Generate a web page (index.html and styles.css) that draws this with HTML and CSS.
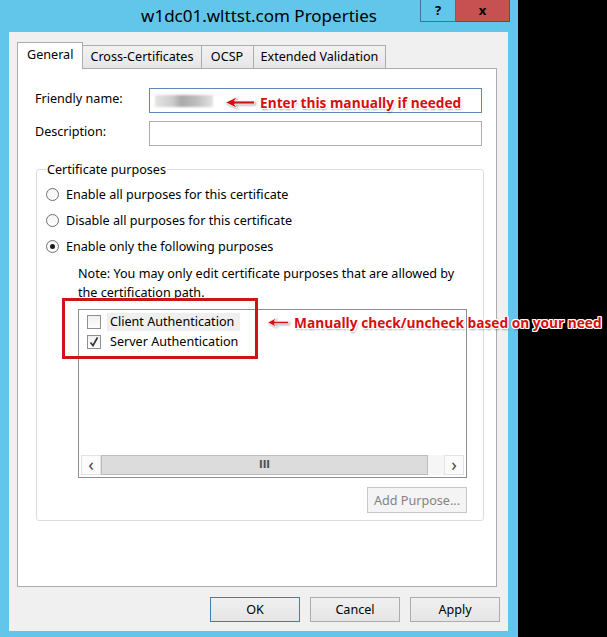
FILE: index.html
```html
<!DOCTYPE html>
<html lang="en">
<head>
    <meta charset="UTF-8">
    <title>w1dc01.wlttst.com Properties</title>
    <link rel="stylesheet" href="styles.css">
</head>
<body>
    <div class="window">
        <div class="titlebar">
            <div class="title">w1dc01.wlttst.com Properties</div>
            <div class="controls">
                <span class="btn-help">?</span>
                <span class="btn-close">x</span>
            </div>
        </div>

        <div class="frame">
            <ul class="tabs">
                <li class="tab active">General</li>
                <li class="tab">Cross-Certificates</li>
                <li class="tab">OCSP</li>
                <li class="tab">Extended Validation</li>
            </ul>

            <div class="panel">
                <div class="field-row">
                    <label>Friendly name:</label>
                    <div class="input focused"><span class="blurred"></span></div>
                </div>
                <div class="field-row">
                    <label>Description:</label>
                    <div class="input"></div>
                </div>

                <fieldset class="group">
                    <legend>Certificate purposes</legend>
                    <div class="radio-row"><span class="radio"></span>Enable all purposes for this certificate</div>
                    <div class="radio-row"><span class="radio"></span>Disable all purposes for this certificate</div>
                    <div class="radio-row"><span class="radio checked"></span>Enable only the following purposes</div>

                    <p class="note">Note: You may only edit certificate purposes that are allowed by<br>the certification path.</p>

                    <div class="listbox">
                        <div class="items">
                            <div class="item">
                                <span class="check"></span>
                                <span class="item-label hot">Client Authentication</span>
                            </div>
                            <div class="item">
                                <span class="check">
                                    <svg width="12" height="12" viewBox="0 0 12 12"><path d="M2.5 6.5 L5 9.5 L9.5 1.5" fill="none" stroke="#333" stroke-width="1.6"/></svg>
                                </span>
                                <span class="item-label">Server Authentication</span>
                            </div>
                        </div>
                        <div class="hscroll">
                            <span class="sb-btn">&lsaquo;</span>
                            <span class="sb-thumb">III</span>
                            <span class="sb-track"></span>
                            <span class="sb-btn">&rsaquo;</span>
                        </div>
                    </div>

                    <div class="add-row">
                        <button class="btn" disabled>Add Purpose...</button>
                    </div>
                </fieldset>
            </div>

            <div class="buttons">
                <button class="btn default">OK</button>
                <button class="btn">Cancel</button>
                <button class="btn">Apply</button>
            </div>
        </div>

        <!-- annotations drawn over the screenshot -->
        <div class="callout callout-name">
            <svg width="30" height="13" viewBox="0 0 30 13"><path d="M0.5 6.5 L12 0.8 L9.5 5 L29.5 5 L29.5 8 L9.5 8 L12 12.2 Z" fill="#d40f0f" stroke="#fff" stroke-width="0.8"/></svg>
            <span>Enter this manually if needed</span>
        </div>
        <div class="red-box"></div>
        <div class="callout callout-check">
            <svg width="22" height="11" viewBox="0 0 22 11"><path d="M0.5 5.5 L9 1 L7.5 4.3 L21.5 4.3 L21.5 6.7 L7.5 6.7 L9 10 Z" fill="#d40f0f" stroke="#fff" stroke-width="0.8"/></svg>
            <span>Manually check/uncheck based on your need</span>
        </div>
    </div>
</body>
</html>
```

FILE: styles.css
```css
/* General Styles */
body {
    margin: 0;
    background-color: #000;
    font-family: "Noto Sans", "Open Sans", sans-serif;
    font-size: 12.6px;
    color: #000;
}

.window {
    width: 518px;
    height: 637px;
    background-color: #62c6ea;
    position: relative;
}

/* Title Bar */
.titlebar {
    height: 32px;
    display: grid;
}

.title,
.controls {
    grid-area: 1 / 1;
}

.title {
    text-align: center;
    font-size: 17px;
    line-height: 31px;
}

.controls {
    justify-self: end;
    align-self: start;
    display: flex;
    margin-right: 8px;
}

.btn-help,
.btn-close {
    height: 22px;
    box-sizing: border-box;
    text-align: center;
    font-weight: bold;
    font-size: 13px;
    line-height: 20px;
}

.btn-help {
    width: 36px;
    border: 1px solid #3b7694;
    border-top: none;
}

.btn-close {
    width: 54px;
    background-color: #c75050;
    border: 1px solid #8d3b3b;
    border-top: none;
    border-left: none;
}

/* Dialog Frame */
.frame {
    margin: 0 10px 0 9px;
    height: 599px;
    box-sizing: border-box;
    padding: 10px 8px 9px 8px;
    background-color: #f0f0f0;
    display: flex;
    flex-direction: column;
}

/* Tabs */
.tabs {
    display: flex;
    align-items: flex-end;
    list-style: none;
    margin: 0;
    padding: 0;
    height: 26px;
    position: relative;
    z-index: 1;
}

.tab {
    min-width: 52px;
    height: 23px;
    box-sizing: border-box;
    padding: 0 7px;
    text-align: center;
    line-height: 21px;
    border: 1px solid #acacac;
    border-bottom: none;
    border-left: none;
    background: linear-gradient(#f2f2f2, #e6e6e6);
}

.tab.active {
    height: 27px;
    margin-bottom: -1px;
    padding: 0 9px;
    line-height: 23px;
    border-left: 1px solid #acacac;
    background: #fff;
}

/* Panel */
.panel {
    flex: 1;
    margin-right: 3px;
    background-color: #fff;
    border: 1px solid #acacac;
    padding: 19px 12px 0 17px;
    display: flex;
    flex-direction: column;
}

.field-row {
    display: flex;
    align-items: flex-start;
    padding-right: 2px;
    margin-bottom: 8px;
}

.field-row label {
    width: 114px;
    padding-top: 2px;
}

.input {
    flex: 1;
    height: 25px;
    box-sizing: border-box;
    border: 1px solid #abadb3;
    background-color: #fff;
}

.input.focused {
    border-color: #5d8bb8;
}

.blurred {
    display: block;
    width: 58px;
    height: 12px;
    margin: 6px 0 0 5px;
    background: linear-gradient(90deg, #e4e4e4 0%, #cdcdcd 30%, #a9a9a9 45%, #bcbcbc 70%, #e2e2e2 100%);
    filter: blur(1px);
}

/* Certificate Purposes */
.group {
    margin: 7px 0 0 1px;
    padding: 3px 16px 7px 9px;
    border: 1px solid #dcdcdc;
    border-radius: 3px;
}

.group legend {
    padding: 0 1px;
}

.radio-row {
    display: flex;
    align-items: center;
    height: 26px;
}

.radio {
    width: 13px;
    height: 13px;
    box-sizing: border-box;
    border: 1px solid #6f6f6f;
    border-radius: 50%;
    background: linear-gradient(#f4f4f4, #fff);
    margin-right: 7px;
    display: flex;
    align-items: center;
    justify-content: center;
}

.radio.checked::after {
    content: "";
    width: 5px;
    height: 5px;
    border-radius: 50%;
    background-color: #1a1a1a;
}

.note {
    margin: 5px 0 7px 32px;
    line-height: 19px;
    white-space: nowrap;
}

/* Purposes List */
.listbox {
    margin-left: 32px;
    height: 169px;
    box-sizing: border-box;
    padding: 2px;
    border: 1px solid #8a8f96;
    display: flex;
    flex-direction: column;
}

.items {
    flex: 1;
    padding: 0 0 0 6px;
}

.item {
    display: flex;
    align-items: center;
    height: 20px;
}

.check {
    width: 14px;
    height: 14px;
    box-sizing: border-box;
    border: 1px solid #8e8f8f;
    background: linear-gradient(#f0f0f0, #fdfdfd);
    margin-right: 6px;
    display: flex;
    align-items: center;
    justify-content: center;
}

.item-label {
    padding: 0 6px 0 3px;
    line-height: 18px;
}

.item-label.hot {
    background-color: #efefef;
}

.hscroll {
    height: 20px;
    display: flex;
}

.sb-btn {
    width: 20px;
    box-sizing: border-box;
    border: 1px solid #e3e3e3;
    background-color: #fbfbfb;
    text-align: center;
    font-size: 18px;
    line-height: 16px;
    color: #444;
}

.sb-thumb {
    width: 327px;
    box-sizing: border-box;
    border: 1px solid #bcbcbc;
    background-color: #dcdcdc;
    text-align: center;
    font-family: "DejaVu Sans", sans-serif;
    font-size: 10px;
    font-weight: bold;
    line-height: 18px;
    color: #505050;
}

.sb-track {
    flex: 1;
    background-color: #f6f6f6;
}

.add-row {
    display: flex;
    justify-content: flex-end;
    margin-top: 9px;
}

/* Buttons */
.btn {
    font-family: inherit;
    font-size: 12.6px;
    width: 90px;
    height: 25px;
    padding: 0;
    border: 1px solid #acacac;
    background: linear-gradient(#f0f0f0, #e5e5e5);
    color: #000;
}

.btn.default {
    border-color: #3c7fb1;
}

.add-row .btn {
    width: 100px;
    height: 26px;
    border-color: #c8c8c8;
    background: #f4f4f4;
    color: #838383;
}

.buttons {
    display: flex;
    justify-content: flex-end;
    gap: 10px;
    margin-top: 10px;
}

/* Annotations */
.callout {
    position: absolute;
    display: flex;
    align-items: center;
    gap: 5px;
    font-family: "Open Sans", "Noto Sans", sans-serif;
    font-weight: bold;
    font-size: 13.7px;
    color: #d40f0f;
    white-space: nowrap;
    text-shadow: 1px 0 0 #fff, -1px 0 0 #fff, 0 1px 0 #fff, 0 -1px 0 #fff,
        1px 1px 0 #fff, -1px -1px 0 #fff, 1px -1px 0 #fff, -1px 1px 0 #fff,
        1px 2px 2px rgba(0, 0, 0, 0.35);
}

.callout svg {
    filter: drop-shadow(1px 1px 1px rgba(0, 0, 0, 0.35));
}

.callout-name {
    left: 225px;
    top: 93px;
}

.callout-check {
    left: 267px;
    top: 313px;
}

.red-box {
    position: absolute;
    left: 62px;
    top: 298px;
    width: 196px;
    height: 61px;
    box-sizing: border-box;
    border: 3px solid #d0121b;
}
```
